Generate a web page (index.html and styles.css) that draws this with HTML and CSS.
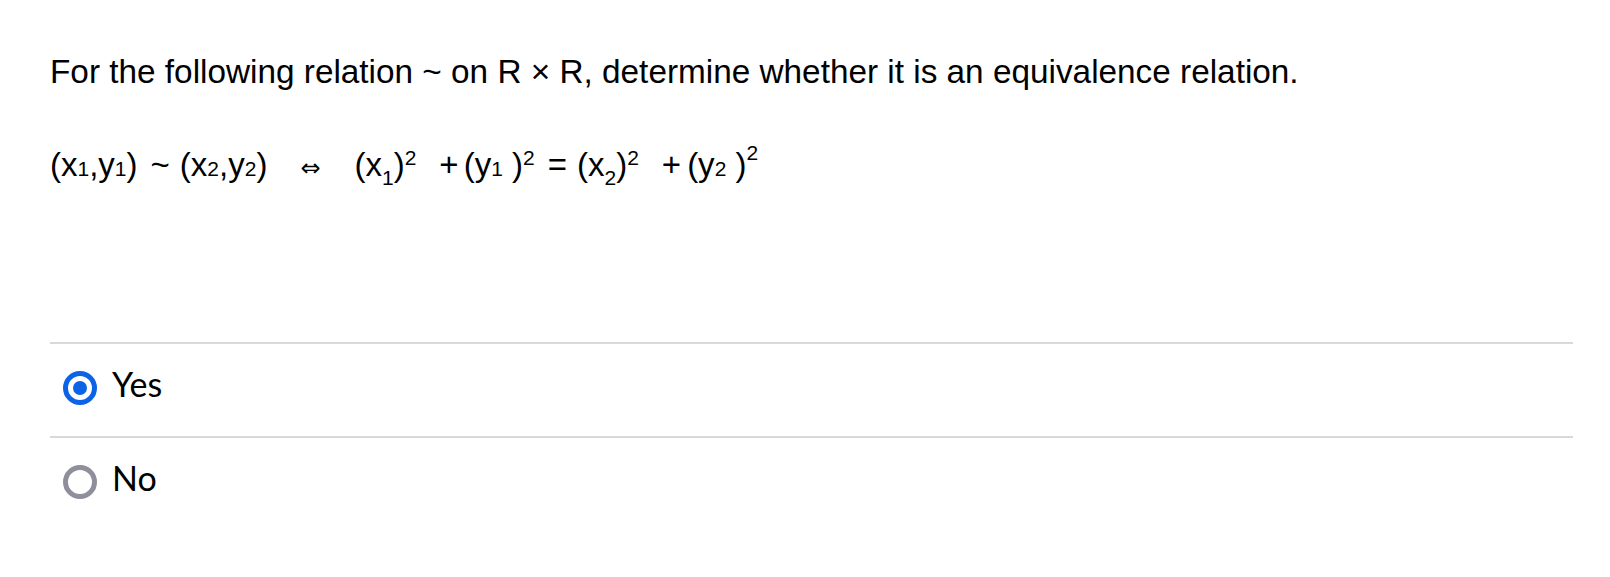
FILE: index.html
```html
<!DOCTYPE html>
<html>
<head>
<meta charset="utf-8">
<link rel="stylesheet" href="styles.css">
</head>
<body>
<div class="page">
  <p class="question">For the following relation ~ on R × R, determine whether it is an equivalence relation.</p>
  <div class="formula">
    <span class="seg">(x<span class="sm">1</span>,y<span class="sm">1</span>)</span>
    <span class="seg s-tilde">~</span>
    <span class="seg s-c">(x<span class="sm">2</span>,y<span class="sm">2</span>)</span>
    <span class="seg s-arrow">⇔</span>
    <span class="seg s-e">(x<sub>1</sub>)<sup>2</sup></span>
    <span class="seg s-plus">+</span>
    <span class="seg s-g">(y<span class="sm">1</span> )<sup>2</sup></span>
    <span class="seg s-eq">=</span>
    <span class="seg s-i">(x<sub>2</sub>)<sup>2</sup></span>
    <span class="seg s-plus">+</span>
    <span class="seg s-k">(y<span class="sm">2</span> )<sup class="hi">2</sup></span>
  </div>
  <div class="options">
    <label class="option">
      <span class="radio radio-on"><span class="dot"></span></span>
      <span class="label">Yes</span>
    </label>
    <label class="option">
      <span class="radio radio-off"></span>
      <span class="label">No</span>
    </label>
  </div>
</div>
</body>
</html>
```
FILE: styles.css
```css
html, body {
  margin: 0;
  padding: 0;
  background: #ffffff;
}
body {
  font-family: "Liberation Sans", Arial, sans-serif;
  color: #000000;
}
.page {
  padding: 53px 37px 0 50px;
}
.question {
  margin: 0;
  font-size: 33.33px;
  line-height: 38px;
  white-space: nowrap;
}
.formula {
  margin-top: 54px;
  display: flex;
  align-items: baseline;
  font-size: 33px;
  line-height: 40px;
  height: 40px;
  white-space: pre;
}
.seg {
  display: inline-block;
}
.sm {
  font-size: 21px;
  line-height: 0;
}
sub, sup {
  font-size: 21px;
  line-height: 0;
  position: relative;
  vertical-align: baseline;
}
sub {
  top: 9px;
}
sup {
  top: -11px;
}
sup.hi {
  top: -16px;
}
.s-tilde { margin-left: 13px; }
.s-c { margin-left: 10px; }
.s-arrow {
  margin-left: 33px;
  font-family: "DejaVu Sans", sans-serif;
  font-size: 24px;
  line-height: 1;
}
.s-e { margin-left: 34px; }
.s-plus { margin-left: 23px; }
.s-g { margin-left: 5px; }
.s-eq { margin-left: 13px; }
.s-i { margin-left: 10px; }
.s-k { margin-left: 6px; }

.options {
  margin-top: 157px;
}
.option {
  display: flex;
  align-items: flex-start;
  border-top: 2px solid #d9d9d9;
  height: 65px;
  padding-top: 27px;
}
.radio {
  box-sizing: border-box;
  width: 34px;
  height: 34px;
  border-radius: 50%;
  margin-left: 13px;
  display: flex;
  align-items: center;
  justify-content: center;
  flex: none;
}
.radio-on {
  border: 5px solid #0b63e5;
}
.radio-on .dot {
  width: 14px;
  height: 14px;
  border-radius: 50%;
  background: #0b63e5;
}
.radio-off {
  border: 5px solid #8f8f9b;
}
.label {
  margin-left: 15px;
  margin-top: -4px;
  font-family: Lato, "Liberation Sans", sans-serif;
  font-size: 34px;
  line-height: 34px;
}
```
